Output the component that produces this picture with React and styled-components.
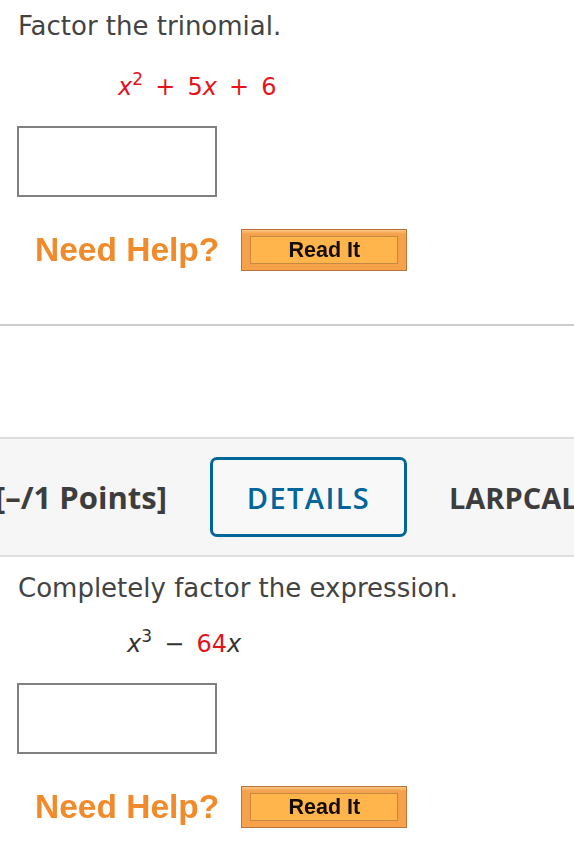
import React from 'react';
import styled, { createGlobalStyle } from 'styled-components';

const GlobalStyle = createGlobalStyle`
  html, body {
    margin: 0;
    padding: 0;
    background: #fff;
    overflow: hidden;
  }
`;

// question data: prompt, expression parts and spacing for the math line
const questions = [
  {
    prompt: 'Factor the trinomial.',
    top: 11,
    mathGap: 33,
    indent: 101,
    expr: [
      { text: 'x', italic: true, red: true },
      { sup: '2', red: true },
      { text: ' + 5', red: true },
      { text: 'x', italic: true, red: true },
      { text: ' + 6', red: true }
    ]
  },
  {
    prompt: 'Completely factor the expression.',
    top: 16,
    mathGap: 28,
    indent: 110,
    expr: [
      { text: 'x', italic: true },
      { sup: '3' },
      { text: ' \u2212 ' },
      { text: '64', red: true },
      { text: 'x', italic: true }
    ]
  }
];

const Page = styled.div`
  width: 574px;
  height: 852px;
  overflow: hidden;
`;

const Question = styled.section`
  padding: 0 0 0 17px;
`;

const Prompt = styled.p`
  margin: 0;
  padding-top: ${p => p.$top}px;
  padding-left: 1px;
  font-family: 'DejaVu Sans', Verdana, sans-serif;
  font-size: 26px;
  line-height: 30px;
  color: #434343;
`;

const MathLine = styled.div`
  margin-top: ${p => p.$gap}px;
  margin-left: ${p => p.$indent}px;
  font-family: 'DejaVu Sans', Verdana, sans-serif;
  font-size: 24px;
  line-height: 26px;
  word-spacing: 4.5px;
  color: #333;
  white-space: pre;
`;

const Term = styled.span`
  font-style: ${p => (p.$italic ? 'italic' : 'normal')};
  color: ${p => (p.$red ? '#e3141c' : '#333')};
`;

const Sup = styled.sup`
  font-size: 17px;
  line-height: 0;
  vertical-align: 10px;
  color: ${p => (p.$red ? '#e3141c' : '#333')};
`;

const AnswerBox = styled.div`
  margin-top: 26px;
  width: 196px;
  height: 67px;
  border: 2px solid #808080;
  background: #fff;
`;

const HelpRow = styled.div`
  display: flex;
  align-items: center;
  margin-top: 32px;
  padding-left: 18px;
  gap: 22px;
`;

const NeedHelp = styled.span`
  font-family: 'Liberation Sans', Arial, sans-serif;
  font-weight: 700;
  font-size: 33.5px;
  color: #f08a2b;
  filter: blur(0.4px);
`;

const ReadIt = styled.button`
  box-sizing: border-box;
  width: 166px;
  height: 42px;
  padding: 6px 8px;
  border: 1px solid #b8743a;
  background: linear-gradient(#fbc783 0, #f5a04a 4px, #f7a24a 100%);
  cursor: pointer;
  display: flex;
`;

const ReadItFace = styled.span`
  flex: 1;
  display: flex;
  align-items: center;
  justify-content: center;
  border: 1px solid #c48a44;
  background: #ffb54c;
  font-family: 'Liberation Sans', Arial, sans-serif;
  font-weight: 700;
  font-size: 21.5px;
  color: #140d04;
  filter: blur(0.3px);
`;

const Divider = styled.hr`
  margin: 53px 0 0;
  border: 0;
  height: 2px;
  background: #cccccc;
`;

const Spacer = styled.div`
  height: 111px;
`;

const HeaderBand = styled.div`
  display: flex;
  align-items: center;
  height: 80px;
  padding: 18px 0;
  border-top: 2px solid #dddddd;
  border-bottom: 2px solid #dddddd;
  background: #f6f6f6;
  white-space: nowrap;
  overflow: hidden;
`;

const Points = styled.span`
  margin-left: -5px;
  font-family: 'Open Sans', sans-serif;
  font-weight: 700;
  font-size: 31px;
  color: #3d3d3d;
`;

const DetailsButton = styled.button`
  box-sizing: border-box;
  flex: none;
  width: 197px;
  height: 80px;
  margin-left: 43px;
  border: 3px solid #006699;
  border-radius: 7px;
  background: #f8f8f8;
  font-family: 'Open Sans', sans-serif;
  font-weight: 600;
  font-size: 29px;
  letter-spacing: 1.4px;
  color: #00659a;
  cursor: pointer;
`;

const Code = styled.span`
  margin-left: 42px;
  font-family: 'Open Sans', sans-serif;
  font-weight: 700;
  font-size: 29px;
  color: #3d3d3d;
`;

function Expression({ parts, indent, gap }) {
  return (
    <MathLine $indent={indent} $gap={gap}>
      {parts.map((p, i) =>
        p.sup ? (
          <Sup key={i} $red={p.red}>{p.sup}</Sup>
        ) : (
          <Term key={i} $italic={p.italic} $red={p.red}>{p.text}</Term>
        )
      )}
    </MathLine>
  );
}

function QuestionBlock({ q }) {
  return (
    <Question>
      <Prompt $top={q.top}>{q.prompt}</Prompt>
      <Expression parts={q.expr} indent={q.indent} gap={q.mathGap} />
      <AnswerBox />
      <HelpRow>
        <NeedHelp>Need Help?</NeedHelp>
        <ReadIt>
          <ReadItFace>Read It</ReadItFace>
        </ReadIt>
      </HelpRow>
    </Question>
  );
}

export default function App() {
  return (
    <Page>
      <GlobalStyle />
      <QuestionBlock q={questions[0]} />
      <Divider />
      <Spacer />
      <HeaderBand>
        <Points>[–/1 Points]</Points>
        <DetailsButton>DETAILS</DetailsButton>
        <Code>LARPCALC10 1.5.012.</Code>
      </HeaderBand>
      <QuestionBlock q={questions[1]} />
    </Page>
  );
}
